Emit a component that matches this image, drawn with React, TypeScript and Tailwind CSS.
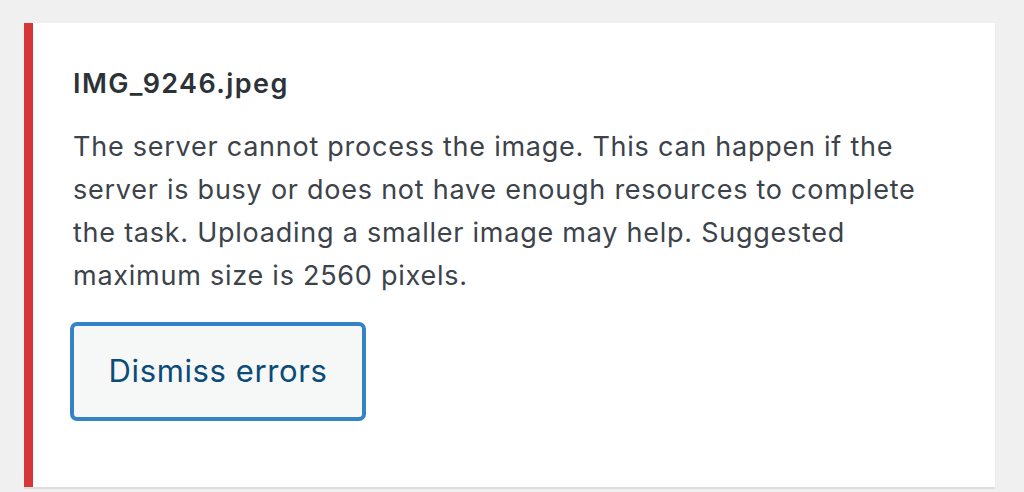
export default function App() {
  return (
    <div className="min-h-[492px] bg-[#f0f0f1] pt-[23px] pl-[24px] pr-[29px] font-['Inter',sans-serif]">
      <div className="border-l-[9px] border-[#d63638] bg-white pl-[40px] pr-[40px] pt-[45px] pb-[66px] shadow-[0_2px_1px_rgba(0,0,0,0.08)]">
        <h1 className="text-[27px] font-semibold leading-[31px] tracking-[1.4px] text-[#2c3338]">IMG_9246.jpeg</h1>
        <p className="mt-[26px] text-[27px] leading-[43px] tracking-[0.75px] text-[#3c434a]">
          The server cannot process the image. This can happen if the server is busy or does not have enough resources to complete the task. Uploading a smaller image may help. Suggested maximum size is 2560 pixels.
        </p>
        <button className="mt-[25px] -ml-[3px] h-[99px] w-[296px] rounded-[7px] border-[4px] border-[#3582c4] bg-[#f6f7f7] text-[31px] tracking-[0.6px] text-[#0a4b78]">
          Dismiss errors
        </button>
      </div>
    </div>
  );
}
